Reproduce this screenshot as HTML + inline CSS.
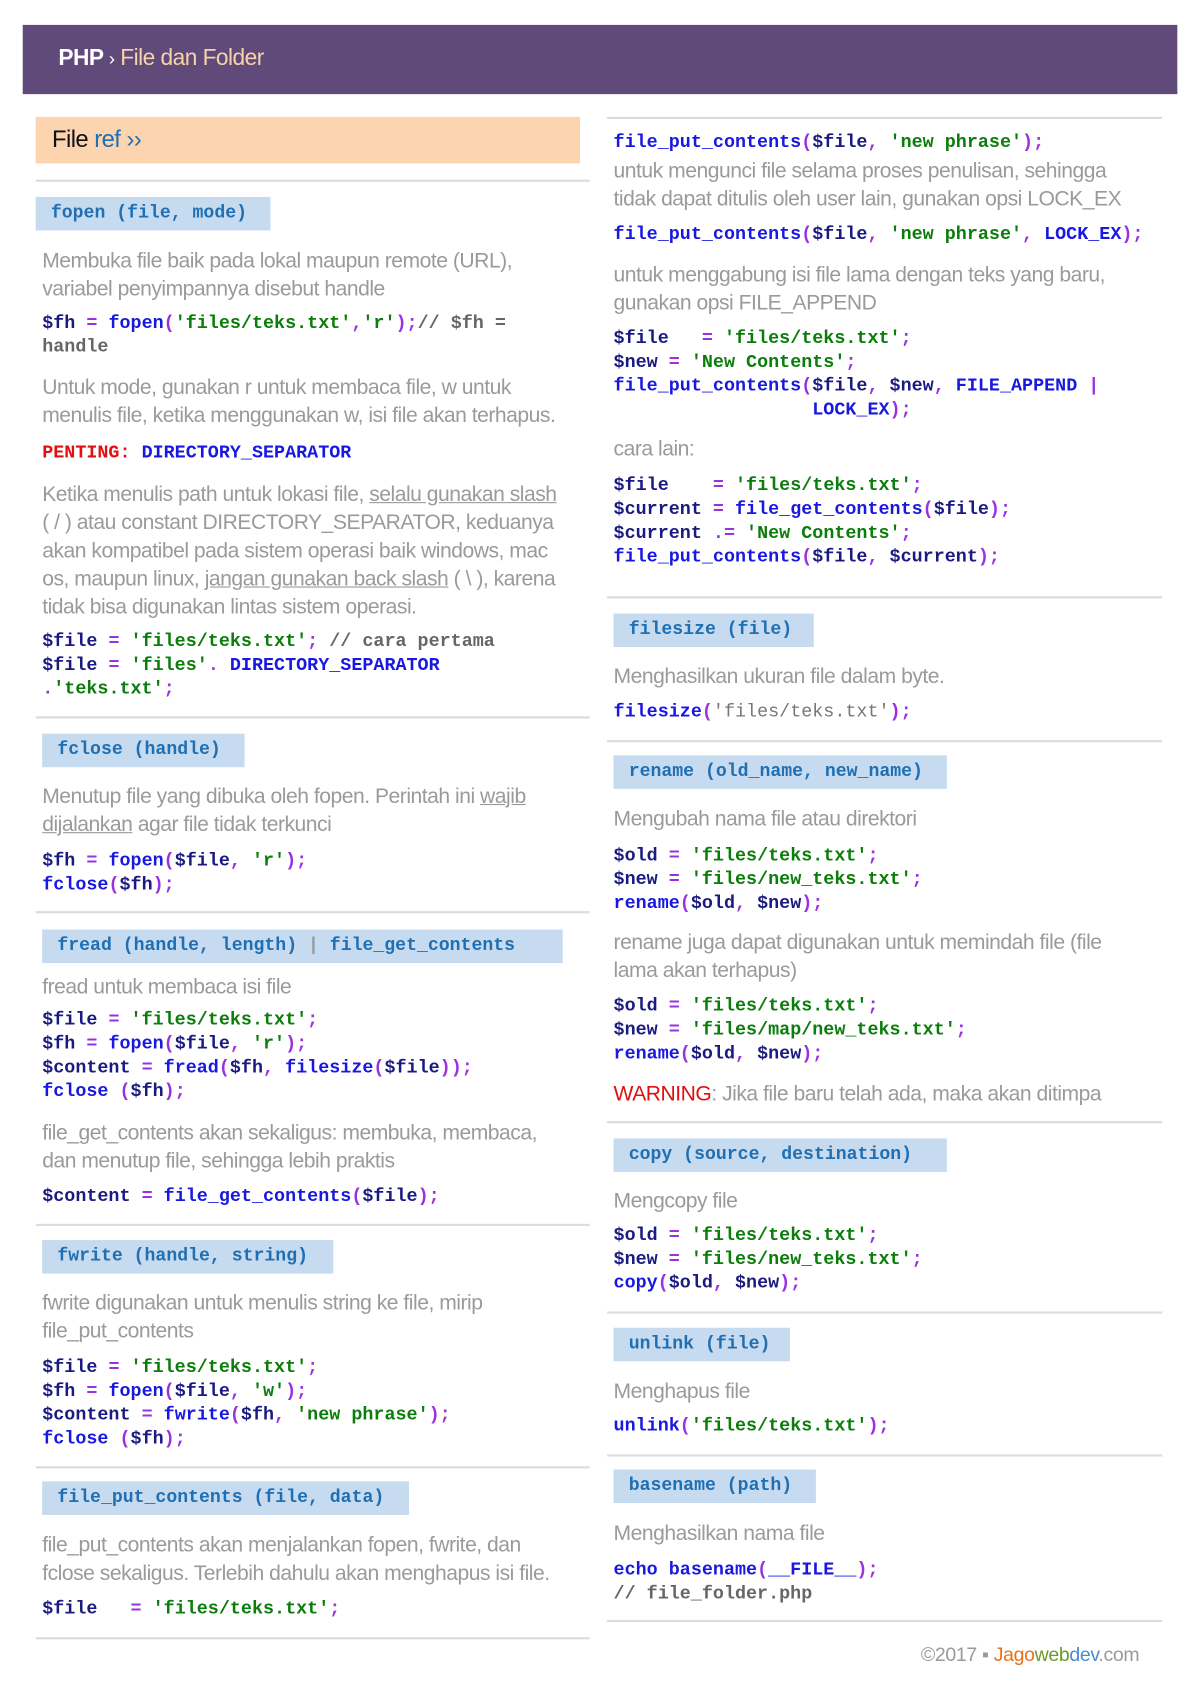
<!DOCTYPE html>
<html><head><meta charset="utf-8"><style>
html,body{margin:0;padding:0;background:#fff;}
body{width:1200px;height:1696px;overflow:hidden;position:relative;}
#w{position:absolute;left:0;top:0;width:1109px;height:1568px;transform:scale(1.0821);transform-origin:0 0;}
.a{position:absolute;white-space:nowrap;}
.p{font-family:"Liberation Sans",sans-serif;font-size:19.5px;line-height:26px;color:#9a9a9a;letter-spacing:-0.45px;}
.c{font-family:"Liberation Mono",monospace;font-size:17px;line-height:22px;color:#1a1a80;font-weight:bold;white-space:pre;}
.t{background:#c6daf0;font-family:"Liberation Mono",monospace;font-size:16.8px;font-weight:bold;color:#1f6fb2;box-sizing:border-box;padding-left:14px;line-height:31px;height:31px;}
.h{position:absolute;height:2px;background:#dcdcdc;}
.f{color:#1818e0}.s{color:#0a7d0a}.o{color:#9b30e0}.k{color:#666;font-weight:bold}.v{color:#1a1a80}
u{text-decoration:underline;text-decoration-color:#999}
</style></head><body><div id="w">
<div class="a" style="left:21px;top:23px;width:1067px;height:64px;background:#5f4a7a;"></div>
<div class="a" style="left:54px;top:39px;font-family:'Liberation Sans',sans-serif;font-size:21px;line-height:30px;color:#fff;font-weight:bold;letter-spacing:-0.5px">PHP <span style="font-weight:normal;color:#fff;font-size:17px">›</span> <span style="font-weight:normal;color:#f8d2a8">File dan Folder</span></div>

<!-- LEFT -->
<div class="a" style="left:33px;top:108px;width:503px;height:43px;background:#fcd4b0;"></div>
<div class="a" style="left:48px;top:115px;font-family:'Liberation Sans',sans-serif;font-size:22px;line-height:28px;color:#111;letter-spacing:-0.5px">File <span style="color:#1f6fb2">ref ››</span></div>
<div class="h" style="left:33px;top:166px;width:512px"></div>
<div class="a t" style="left:33px;top:182px;width:217px">fopen (file, mode)</div>
<div class="a p" style="left:39px;top:228px">Membuka file baik pada lokal maupun remote (URL),<br>variabel penyimpannya disebut handle</div>
<div class="a c" style="left:39px;top:289px"><span class="v">$fh</span> <span class="o">=</span> <span class="f">fopen</span><span class="o">(</span><span class="s">'files/teks.txt'</span><span class="o">,</span><span class="s">'r'</span><span class="o">);</span><span class="k">// $fh =
handle</span></div>
<div class="a p" style="left:39px;top:345px">Untuk mode, gunakan r untuk membaca file, w untuk<br>menulis file, ketika menggunakan w, isi file akan terhapus.</div>
<div class="a c" style="left:39px;top:409px"><span style="color:#e01010">PENTING:</span> <span class="f">DIRECTORY_SEPARATOR</span></div>
<div class="a p" style="left:39px;top:444px">Ketika menulis path untuk lokasi file, <u>selalu gunakan slash</u><br>( / ) atau constant DIRECTORY_SEPARATOR, keduanya<br>akan kompatibel pada sistem operasi baik windows, mac<br>os, maupun linux, <u>jangan gunakan back slash</u> ( \ ), karena<br>tidak bisa digunakan lintas sistem operasi.</div>
<div class="a c" style="left:39px;top:583px"><span class="v">$file</span> <span class="o">=</span> <span class="s">'files/teks.txt'</span><span class="o">;</span> <span class="k">// cara pertama</span>
<span class="v">$file</span> <span class="o">=</span> <span class="s">'files'</span><span class="o">.</span> <span class="f">DIRECTORY_SEPARATOR</span>
<span class="o">.</span><span class="s">'teks.txt'</span><span class="o">;</span></div>
<div class="h" style="left:33px;top:662px;width:512px"></div>
<div class="a t" style="left:39px;top:678px;width:187px">fclose (handle)</div>
<div class="a p" style="left:39px;top:723px">Menutup file yang dibuka oleh fopen. Perintah ini <u>wajib</u><br><u>dijalankan</u> agar file tidak terkunci</div>
<div class="a c" style="left:39px;top:786px"><span class="v">$fh</span> <span class="o">=</span> <span class="f">fopen</span><span class="o">(</span><span class="v">$file</span><span class="o">,</span> <span class="s">'r'</span><span class="o">);</span>
<span class="f">fclose</span><span class="o">(</span><span class="v">$fh</span><span class="o">);</span></div>
<div class="h" style="left:33px;top:842px;width:512px"></div>
<div class="a t" style="left:39px;top:859px;width:481px">fread (handle, length) <span style="color:#999">|</span> file_get_contents</div>
<div class="a p" style="left:39px;top:899px">fread untuk membaca isi file</div>
<div class="a c" style="left:39px;top:933px"><span class="v">$file</span> <span class="o">=</span> <span class="s">'files/teks.txt'</span><span class="o">;</span>
<span class="v">$fh</span> <span class="o">=</span> <span class="f">fopen</span><span class="o">(</span><span class="v">$file</span><span class="o">,</span> <span class="s">'r'</span><span class="o">);</span>
<span class="v">$content</span> <span class="o">=</span> <span class="f">fread</span><span class="o">(</span><span class="v">$fh</span><span class="o">,</span> <span class="f">filesize</span><span class="o">(</span><span class="v">$file</span><span class="o">));</span>
<span class="f">fclose</span> <span class="o">(</span><span class="v">$fh</span><span class="o">);</span></div>
<div class="a p" style="left:39px;top:1034px">file_get_contents akan sekaligus: membuka, membaca,<br>dan menutup file, sehingga lebih praktis</div>
<div class="a c" style="left:39px;top:1096px"><span class="v">$content</span> <span class="o">=</span> <span class="f">file_get_contents</span><span class="o">(</span><span class="v">$file</span><span class="o">);</span></div>
<div class="h" style="left:33px;top:1131px;width:512px"></div>
<div class="a t" style="left:39px;top:1146px;width:269px">fwrite (handle, string)</div>
<div class="a p" style="left:39px;top:1191px">fwrite digunakan untuk menulis string ke file, mirip<br>file_put_contents</div>
<div class="a c" style="left:39px;top:1254px"><span class="v">$file</span> <span class="o">=</span> <span class="s">'files/teks.txt'</span><span class="o">;</span>
<span class="v">$fh</span> <span class="o">=</span> <span class="f">fopen</span><span class="o">(</span><span class="v">$file</span><span class="o">,</span> <span class="s">'w'</span><span class="o">);</span>
<span class="v">$content</span> <span class="o">=</span> <span class="f">fwrite</span><span class="o">(</span><span class="v">$fh</span><span class="o">,</span> <span class="s">'new phrase'</span><span class="o">);</span>
<span class="f">fclose</span> <span class="o">(</span><span class="v">$fh</span><span class="o">);</span></div>
<div class="h" style="left:33px;top:1355px;width:512px"></div>
<div class="a t" style="left:39px;top:1369px;width:339px">file_put_contents (file, data)</div>
<div class="a p" style="left:39px;top:1415px">file_put_contents akan menjalankan fopen, fwrite, dan<br>fclose sekaligus. Terlebih dahulu akan menghapus isi file.</div>
<div class="a c" style="left:39px;top:1477px"><span class="v">$file</span>   <span class="o">=</span> <span class="s">'files/teks.txt'</span><span class="o">;</span></div>
<div class="h" style="left:33px;top:1513px;width:512px"></div>

<!-- RIGHT -->
<div class="h" style="left:561px;top:108px;width:513px"></div>
<div class="a c" style="left:567px;top:122px"><span class="f">file_put_contents</span><span class="o">(</span><span class="v">$file</span><span class="o">,</span> <span class="s">'new phrase'</span><span class="o">);</span></div>
<div class="a p" style="left:567px;top:145px">untuk mengunci file selama proses penulisan, sehingga<br>tidak dapat ditulis oleh user lain, gunakan opsi LOCK_EX</div>
<div class="a c" style="left:567px;top:207px"><span class="f">file_put_contents</span><span class="o">(</span><span class="v">$file</span><span class="o">,</span> <span class="s">'new phrase'</span><span class="o">,</span> <span class="f">LOCK_EX</span><span class="o">);</span></div>
<div class="a p" style="left:567px;top:241px">untuk menggabung isi file lama dengan teks yang baru,<br>gunakan opsi FILE_APPEND</div>
<div class="a c" style="left:567px;top:303px"><span class="v">$file</span>   <span class="o">=</span> <span class="s">'files/teks.txt'</span><span class="o">;</span>
<span class="v">$new</span> <span class="o">=</span> <span class="s">'New Contents'</span><span class="o">;</span>
<span class="f">file_put_contents</span><span class="o">(</span><span class="v">$file</span><span class="o">,</span> <span class="v">$new</span><span class="o">,</span> <span class="f">FILE_APPEND</span> <span class="o">|</span>
<span class="f">                  LOCK_EX</span><span class="o">);</span></div>
<div class="a p" style="left:567px;top:402px">cara lain:</div>
<div class="a c" style="left:567px;top:439px"><span class="v">$file</span>    <span class="o">=</span> <span class="s">'files/teks.txt'</span><span class="o">;</span>
<span class="v">$current</span> <span class="o">=</span> <span class="f">file_get_contents</span><span class="o">(</span><span class="v">$file</span><span class="o">);</span>
<span class="v">$current</span> <span class="o">.=</span> <span class="s">'New Contents'</span><span class="o">;</span>
<span class="f">file_put_contents</span><span class="o">(</span><span class="v">$file</span><span class="o">,</span> <span class="v">$current</span><span class="o">);</span></div>
<div class="h" style="left:561px;top:551px;width:513px"></div>
<div class="a t" style="left:567px;top:567px;width:185px">filesize (file)</div>
<div class="a p" style="left:567px;top:612px">Menghasilkan ukuran file dalam byte.</div>
<div class="a c" style="left:567px;top:648px"><span class="f">filesize</span><span class="o">(</span><span style="color:#777;font-weight:normal">'files/teks.txt'</span><span class="o">);</span></div>
<div class="h" style="left:561px;top:684px;width:513px"></div>
<div class="a t" style="left:567px;top:698px;width:308px">rename (old_name, new_name)</div>
<div class="a p" style="left:567px;top:744px">Mengubah nama file atau direktori</div>
<div class="a c" style="left:567px;top:781px"><span class="v">$old</span> <span class="o">=</span> <span class="s">'files/teks.txt'</span><span class="o">;</span>
<span class="v">$new</span> <span class="o">=</span> <span class="s">'files/new_teks.txt'</span><span class="o">;</span>
<span class="f">rename</span><span class="o">(</span><span class="v">$old</span><span class="o">,</span> <span class="v">$new</span><span class="o">);</span></div>
<div class="a p" style="left:567px;top:858px">rename juga dapat digunakan untuk memindah file (file<br>lama akan terhapus)</div>
<div class="a c" style="left:567px;top:920px"><span class="v">$old</span> <span class="o">=</span> <span class="s">'files/teks.txt'</span><span class="o">;</span>
<span class="v">$new</span> <span class="o">=</span> <span class="s">'files/map/new_teks.txt'</span><span class="o">;</span>
<span class="f">rename</span><span class="o">(</span><span class="v">$old</span><span class="o">,</span> <span class="v">$new</span><span class="o">);</span></div>
<div class="a p" style="left:567px;top:998px"><span style="color:#e01010">WARNING</span>: Jika file baru telah ada, maka akan ditimpa</div>
<div class="h" style="left:561px;top:1036px;width:513px"></div>
<div class="a t" style="left:567px;top:1052px;width:308px">copy (source, destination)</div>
<div class="a p" style="left:567px;top:1097px">Mengcopy file</div>
<div class="a c" style="left:567px;top:1132px"><span class="v">$old</span> <span class="o">=</span> <span class="s">'files/teks.txt'</span><span class="o">;</span>
<span class="v">$new</span> <span class="o">=</span> <span class="s">'files/new_teks.txt'</span><span class="o">;</span>
<span class="f">copy</span><span class="o">(</span><span class="v">$old</span><span class="o">,</span> <span class="v">$new</span><span class="o">);</span></div>
<div class="h" style="left:561px;top:1212px;width:513px"></div>
<div class="a t" style="left:567px;top:1227px;width:163px">unlink (file)</div>
<div class="a p" style="left:567px;top:1273px">Menghapus file</div>
<div class="a c" style="left:567px;top:1308px"><span class="f">unlink</span><span class="o">(</span><span class="s">'files/teks.txt'</span><span class="o">);</span></div>
<div class="h" style="left:561px;top:1344px;width:513px"></div>
<div class="a t" style="left:567px;top:1358px;width:187px">basename (path)</div>
<div class="a p" style="left:567px;top:1404px">Menghasilkan nama file</div>
<div class="a c" style="left:567px;top:1441px"><span class="f">echo basename</span><span class="o">(</span><span class="f">__FILE__</span><span class="o">);</span>
<span class="k">// file_folder.php</span></div>
<div class="h" style="left:561px;top:1497px;width:513px"></div>
<div class="a" style="left:851px;top:1518px;font-family:'Liberation Sans',sans-serif;font-size:18px;line-height:22px;color:#999;letter-spacing:-0.3px">©2017 ▪ <span style="color:#e8701a">Jago</span><span style="color:#6a9a2a">web</span><span style="color:#4a8ad0">dev</span>.com</div>
</div></body></html>
